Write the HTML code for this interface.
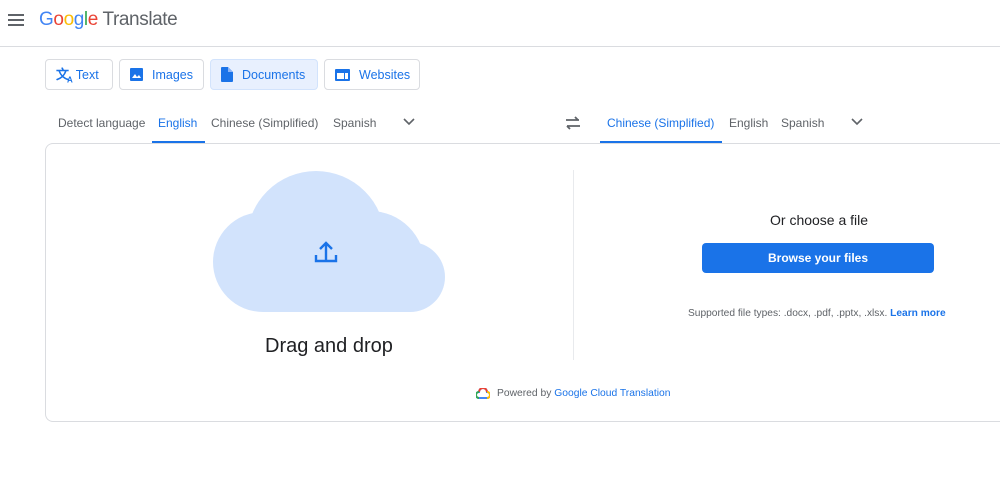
<!DOCTYPE html>
<html><head><meta charset="utf-8"><style>
*{margin:0;padding:0;box-sizing:border-box}
body{width:1000px;height:500px;background:#fff;font-family:"Liberation Sans",Arial,sans-serif;position:relative;overflow:hidden;color:#3c4043}
.abs{position:absolute}
.hdr{top:46px;left:0;width:1000px;height:1px;background:#dadce0}
.btn{position:absolute;top:59px;height:31px;border:1px solid #dadce0;border-radius:4px;font-size:12.5px;color:#1a73e8;display:flex;align-items:center;padding-left:10px;gap:9px;font-weight:500}
.tab{position:absolute;top:116px;font-size:12px;color:#5f6368;font-weight:500}
.card{position:absolute;left:45px;top:143px;width:970px;height:279px;border:1px solid #dadce0;border-radius:8px;border-right:none}
</style></head><body>
<svg class="abs" style="left:8px;top:13px" width="16" height="14"><rect y="1" width="16" height="2" fill="#5f6368"/><rect y="6" width="16" height="2" fill="#5f6368"/><rect y="11" width="16" height="2" fill="#5f6368"/></svg>
<div class="abs" style="left:39px;top:9px;font-size:19px;letter-spacing:-0.4px"><span style="color:#4285f4">G</span><span style="color:#ea4335">o</span><span style="color:#fbbc05">o</span><span style="color:#4285f4">g</span><span style="color:#34a853">l</span><span style="color:#ea4335">e</span> <span style="color:#5f6368">Translate</span></div>
<div class="abs hdr"></div>
<div class="btn" style="left:45px;width:68px;gap:5px"><span style="font-size:13px;font-weight:bold;letter-spacing:-2px">文<sub style="font-size:8px">A</sub></span>Text</div>
<div class="btn" style="left:119px;width:85px"><svg width="13" height="13"><rect width="13" height="13" rx="1" fill="#1a73e8"/><path d="M2 10L5 6l2 3 2-2 2 3z" fill="#fff"/></svg>Images</div>
<div class="btn" style="left:210px;width:108px;background:#e8f0fe;border-color:#d2e3fc"><svg width="12" height="15"><path d="M0 1q0-1 1-1h6l5 5v9q0 1-1 1H1q-1 0-1-1z" fill="#1a73e8"/><path d="M7 0v5h5" fill="#8ab4f8"/></svg>Documents</div>
<div class="btn" style="left:324px;width:96px"><svg width="15" height="12"><rect width="15" height="12" rx="1" fill="#1a73e8"/><rect x="2" y="4" width="7" height="6" fill="#fff"/><rect x="10" y="4" width="3" height="6" fill="#fff"/></svg>Websites</div>
<div class="tab" style="left:58px">Detect language</div>
<div class="tab" style="left:158px;color:#1a73e8">English</div>
<div class="abs" style="left:152px;top:141px;width:53px;height:2px;background:#1a73e8"></div>
<div class="tab" style="left:211px">Chinese (Simplified)</div>
<div class="tab" style="left:333px">Spanish</div>
<svg class="abs" style="left:403px;top:118px" width="12" height="8"><path d="M1 1l5 5 5-5" stroke="#5f6368" stroke-width="1.6" fill="none"/></svg>
<svg class="abs" style="left:565px;top:116px" width="16" height="14"><path d="M1 4h13M10 1l3 3M15 10H2M5 13l-3-3" stroke="#5f6368" stroke-width="1.8" fill="none"/></svg>
<div class="tab" style="left:607px;color:#1a73e8">Chinese (Simplified)</div>
<div class="abs" style="left:600px;top:141px;width:122px;height:2px;background:#1a73e8"></div>
<div class="tab" style="left:729px">English</div>
<div class="tab" style="left:781px">Spanish</div>
<svg class="abs" style="left:851px;top:118px" width="12" height="8"><path d="M1 1l5 5 5-5" stroke="#5f6368" stroke-width="1.6" fill="none"/></svg>
<div class="card"></div>
<svg class="abs" style="left:0;top:0" width="1000" height="500">
<g fill="#d2e3fc">
<circle cx="316" cy="240" r="69"/><circle cx="263" cy="262" r="50"/><circle cx="370" cy="266" r="55"/><circle cx="410" cy="277" r="35"/><rect x="263" y="260" width="147" height="52"/>
</g>
<rect x="300" y="312" width="120" height="20" fill="#fff"/>
<path d="M326 262V244M320 249l6-6 6 6M316 255v6h20v-6" stroke="#1a73e8" stroke-width="2.4" fill="none"/>
<rect x="573" y="170" width="1" height="190" fill="#e8eaed"/>
</svg>
<div class="abs" style="left:265px;top:335px;font-size:20px;color:#202124">Drag and drop</div>
<div class="abs" style="left:770px;top:212px;font-size:14px;color:#202124;font-weight:500">Or choose a file</div>
<div class="abs" style="left:702px;top:243px;width:232px;height:30px;background:#1a73e8;border-radius:4px;color:#fff;font-size:12px;font-weight:bold;display:flex;align-items:center;justify-content:center">Browse your files</div>
<div class="abs" style="left:688px;top:308px;font-size:10.2px;color:#5f6368">Supported file types: .docx, .pdf, .pptx, .xlsx. <b style="color:#1a73e8">Learn more</b></div>
<svg class="abs" style="left:476px;top:388px" width="14" height="11"><path d="M3 10a3 3 0 0 1 0-6a4 4 0 0 1 8 0a3 3 0 0 1 0 6z" fill="none" stroke="#4285f4" stroke-width="2"/><path d="M3 4a4 4 0 0 1 8 0" fill="none" stroke="#ea4335" stroke-width="2"/><path d="M11 4a3 3 0 0 1 0 6" fill="none" stroke="#fbbc05" stroke-width="2"/><path d="M3 10a3 3 0 0 1 0-6" fill="none" stroke="#34a853" stroke-width="2"/></svg>
<div class="abs" style="left:497px;top:388px;font-size:10.3px;color:#5f6368">Powered by <b style="color:#1a73e8;font-weight:500">Google Cloud Translation</b></div>
</body></html>
